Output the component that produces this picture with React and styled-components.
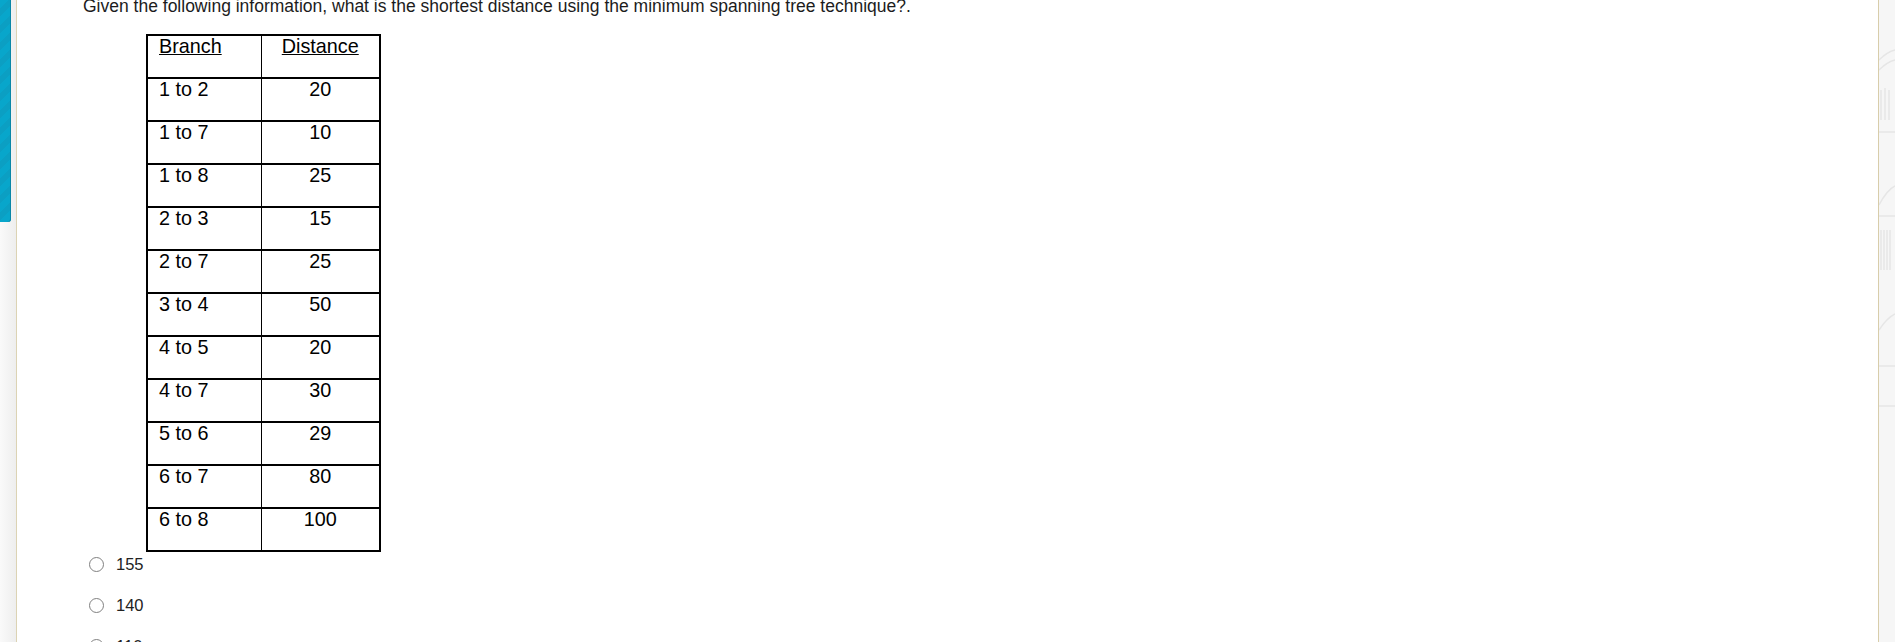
import React from 'react';
import styled, { createGlobalStyle } from 'styled-components';

const GlobalStyle = createGlobalStyle`
  html, body {
    margin: 0;
    padding: 0;
    height: 100%;
    overflow: hidden;
    background: #ffffff;
  }
  body {
    font-family: "Liberation Sans", Arial, sans-serif;
    color: #1a1a1a;
  }
`;

const Page = styled.div`
  display: flex;
  height: 642px;
  width: 1895px;
`;

// 왼쪽 파란 탭이 있는 레일
const LeftRail = styled.div`
  width: 16px;
  flex: none;
  background: linear-gradient(to right, #fafafa, #eeeeee);
  border-right: 1px solid #dcd3b4;
`;

const BlueTab = styled.div`
  width: 11px;
  height: 222px;
  border-bottom-right-radius: 3px;
  background: repeating-linear-gradient(
    135deg,
    #08a6cb 0px,
    #08a6cb 6px,
    #0b9fc3 6px,
    #0b9fc3 12px
  );
  box-shadow: inset -1px 0 0 #0a86a6;
`;

const Main = styled.div`
  flex: 1;
  display: flex;
  flex-direction: column;
  align-items: flex-start;
`;

const Question = styled.p`
  margin: -4px 0 0 66px;
  font-size: 17.5px;
  line-height: 20px;
  color: #1c1c1c;
`;

const Table = styled.table`
  margin: 18px 0 0 129px;
  border-collapse: collapse;
  border: 2px solid #000;
`;

const Cell = styled.td`
  border-top: 2px solid #000;
  border-bottom: 2px solid #000;
  border-left: 1px solid #000;
  border-right: 1px solid #000;
  height: 43px;
  padding: 1px 0 0 ${(p) => (p.$center ? 0 : 11)}px;
  box-sizing: border-box;
  width: ${(p) => (p.$center ? 119 : 114)}px;
  font-size: 19.8px;
  line-height: 19px;
  vertical-align: top;
  text-align: ${(p) => (p.$center ? 'center' : 'left')};
  color: #000;
`;

const HeadText = styled.span`
  text-decoration: underline;
`;

const Options = styled.div`
  display: flex;
  flex-direction: column;
  gap: 22px;
  margin: 3px 0 0 72px;
`;

const Option = styled.label`
  display: flex;
  align-items: center;
  gap: 12px;
  font-size: 16.5px;
  line-height: 19px;
  color: #222;
`;

const Radio = styled.span`
  width: 15px;
  height: 15px;
  box-sizing: border-box;
  border: 1.5px solid #808080;
  border-radius: 50%;
  background: #fff;
`;

const RightRail = styled.div`
  width: 16px;
  flex: none;
  border-left: 1px solid #d8cdaa;
  background: #f6f6f6;
`;

const rows = [
  ['1 to 2', '20'],
  ['1 to 7', '10'],
  ['1 to 8', '25'],
  ['2 to 3', '15'],
  ['2 to 7', '25'],
  ['3 to 4', '50'],
  ['4 to 5', '20'],
  ['4 to 7', '30'],
  ['5 to 6', '29'],
  ['6 to 7', '80'],
  ['6 to 8', '100'],
];

const answers = ['155', '140', '110'];

const App = () => {
  return (
    <>
      <GlobalStyle />
      <Page>
        <LeftRail>
          <BlueTab />
        </LeftRail>
        <Main>
          <Question>
            Given the following information, what is the shortest distance using the minimum spanning tree technique?.
          </Question>
          <Table>
            <tbody>
              <tr>
                <Cell><HeadText>Branch</HeadText></Cell>
                <Cell $center><HeadText>Distance</HeadText></Cell>
              </tr>
              {rows.map(([b, d]) => (
                <tr key={b}>
                  <Cell>{b}</Cell>
                  <Cell $center>{d}</Cell>
                </tr>
              ))}
            </tbody>
          </Table>
          <Options>
            {answers.map((a) => (
              <Option key={a}>
                <Radio />
                {a}
              </Option>
            ))}
          </Options>
        </Main>
        <RightRail>
          <svg width="16" height="642" viewBox="0 0 16 642">
            <g stroke="#e6e6e6" strokeWidth="1.5" fill="none">
              <path d="M0 60 Q8 52 16 50" />
              <path d="M0 70 Q8 62 16 60" />
              <path d="M2 90 L2 120 M6 88 L6 120 M10 90 L10 120" />
              <path d="M0 132 L16 132" />
              <path d="M0 205 Q8 190 16 186" />
              <path d="M0 216 L16 216" />
              <path d="M2 230 L2 270 M5 230 L5 270 M8 230 L8 270 M11 230 L11 270" />
              <path d="M0 330 Q8 318 16 314" />
              <path d="M0 366 L16 366" />
              <path d="M0 406 L16 406" />
            </g>
          </svg>
        </RightRail>
      </Page>
    </>
  );
};

export default App;
